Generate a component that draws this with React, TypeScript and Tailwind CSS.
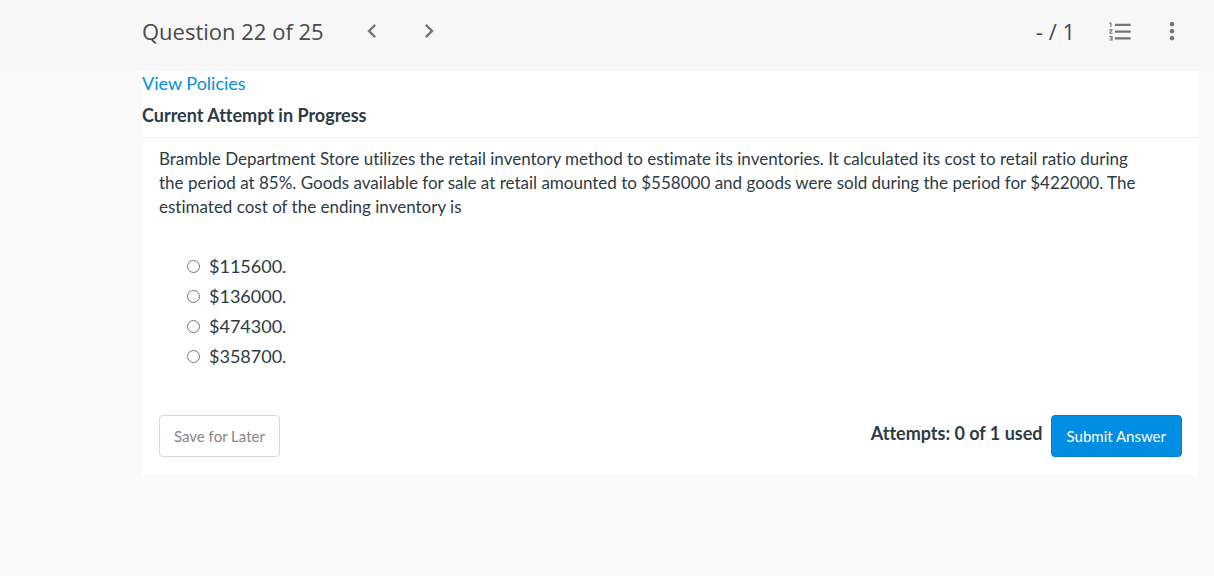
import React from 'react';
import { MdChevronLeft, MdChevronRight, MdFormatListNumbered, MdMoreVert } from 'react-icons/md';

const choices = ['$115600.', '$136000.', '$474300.', '$358700.'];

function IconButton({ label, children }: { label: string; children: React.ReactNode }) {
  return (
    <button type="button" aria-label={label} className="text-[#757575]">
      {children}
    </button>
  );
}

export default function App() {
  return (
    <div className="min-h-screen bg-[#fafafa] font-['Lato',sans-serif] text-lg leading-6 text-[#2d3b45] [font-variant-ligatures:none]">
      <header className="flex h-[71px] items-start bg-[#f7f7f7] pt-[17px] pr-7 pl-[142px] font-['Open_Sans',sans-serif] text-[22px] leading-7 text-[#4a4a4a]">
        <h1>Question 22 of 25</h1>
        <nav aria-label="Questions" className="ml-[34px] flex gap-[29px]">
          <IconButton label="Previous question"><MdChevronLeft size={28} /></IconButton>
          <IconButton label="Next question"><MdChevronRight size={28} /></IconButton>
        </nav>
        <div className="ml-auto flex">
          <span className="mr-8">- / 1</span>
          <div className="flex gap-6">
            <IconButton label="Question list"><MdFormatListNumbered size={27} /></IconButton>
            <IconButton label="More options"><MdMoreVert size={28} /></IconButton>
          </div>
        </div>
      </header>

      <main className="mr-4 ml-[142px] bg-white">
        <div className="border-b border-[#ececec] pb-[10px]">
          <a href="#policies" className="block text-[#008ee2]">View Policies</a>
          <h2 className="mt-2 font-bold">Current Attempt in Progress</h2>
        </div>

        <form className="pt-[9px] pr-4 pb-[18px] pl-[17px]" onSubmit={(e) => e.preventDefault()}>
          <fieldset>
            <legend className="pr-9 text-[17px] leading-6">
              Bramble Department Store utilizes the retail inventory method to estimate its inventories. It calculated its cost to retail ratio during the period at 85%. Goods available for sale at retail amounted to $558000 and goods were sold during the period for $422000. The estimated cost of the ending inventory is
            </legend>
            <div className="mt-8 ml-7 flex flex-col items-start">
              {choices.map((choice) => (
                <label key={choice} className="flex h-[30px] items-center gap-[9px]">
                  <input type="radio" name="answer" value={choice} className="size-[13px]" />
                  {choice}
                </label>
              ))}
            </div>
          </fieldset>

          <div className="mt-11 flex items-center justify-between">
            <button type="button" className="h-[42px] rounded border border-[#d8d8d8] px-[14px] text-[15px] text-[#868686]">
              Save for Later
            </button>
            <div className="flex items-center gap-2">
              <span className="pb-1.5 font-bold">Attempts: 0 of 1 used</span>
              <button type="submit" className="h-[42px] rounded border border-[#007fca] bg-[#008ee2] px-[15px] text-[15px] text-white">
                Submit Answer
              </button>
            </div>
          </div>
        </form>
      </main>
    </div>
  );
}
